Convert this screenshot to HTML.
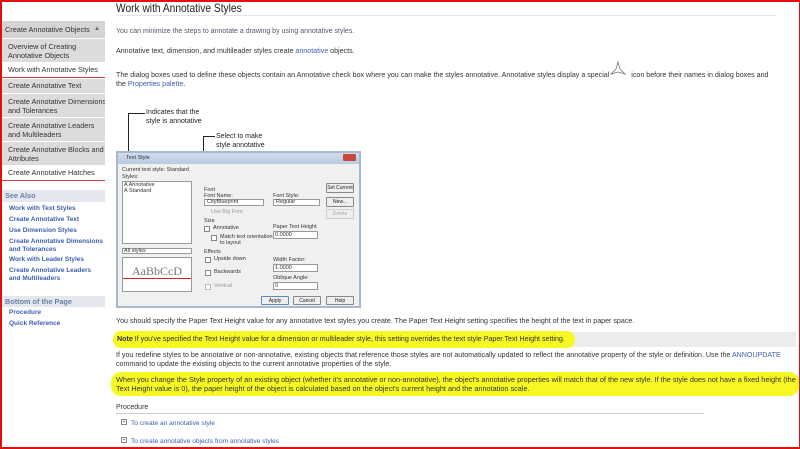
<!DOCTYPE html>
<html><head><style>
*{margin:0;padding:0;box-sizing:border-box}
body{width:800px;height:449px;overflow:hidden;background:#fff;font-family:"Liberation Sans",sans-serif;position:relative;color:#222}
.a{position:absolute;white-space:nowrap}
.frame{position:absolute;left:0;top:0;width:800px;height:449px;border:2px solid #e01010;border-right-width:1px;pointer-events:none;z-index:10}
.it{position:absolute;left:2px;width:103px;background:#dcdcdc;font-size:7.3px;line-height:9px;color:#333;padding-left:6px;white-space:nowrap;overflow:hidden}
.lk{position:absolute;left:9px;font-size:6.5px;font-weight:bold;color:#3a5fb0;line-height:8px;white-space:nowrap}
.t{font-size:7.1px;color:#333}
.blue{color:#3a5fb0}
.dl{position:absolute;font-size:5.5px;color:#333;white-space:nowrap}
.box{position:absolute;background:#fff;border:1px solid #999}
.btn{position:absolute;background:#eee;border:1px solid #888;font-size:5px;text-align:center;line-height:9px;border-radius:1px}
.cb{position:absolute;width:6px;height:6px;border:1px solid #888;background:#fff}
.p{font-size:7.1px;color:#333}
</style></head><body>
<div class="frame"></div>

<div class="it" style="top:21px;height:17px;line-height:17px;padding-left:3px;background:#d4d4d4">Create Annotative Objects<span style="position:absolute;right:5px;font-size:6px;color:#666">▲</span></div>
<div class="it" style="top:39px;height:23px;padding-top:3px">Overview of Creating<br>Annotative Objects</div>
<div class="it" style="top:63px;height:15px;line-height:14px;background:#fff;border-bottom:1px solid #d04040">Work with Annotative Styles</div>
<div class="it" style="top:79px;height:14px;line-height:14px">Create Annotative Text</div>
<div class="it" style="top:94px;height:23px;padding-top:3px">Create Annotative Dimensions<br>and Tolerances</div>
<div class="it" style="top:118px;height:23px;padding-top:3px">Create Annotative Leaders<br>and Multileaders</div>
<div class="it" style="top:142px;height:23px;padding-top:3px">Create Annotative Blocks and<br>Attributes</div>
<div class="it" style="top:166px;height:15px;line-height:14px;background:#fff;border-bottom:1px solid #d04040">Create Annotative Hatches</div>
<div class="it" style="top:190px;height:12px;line-height:12px;background:#e4e8ee;color:#6a80a8;font-weight:bold;padding-left:3px">See Also</div>
<div class="lk" style="top:205px">Work with Text Styles</div>
<div class="lk" style="top:216px">Create Annotative Text</div>
<div class="lk" style="top:227px">Use Dimension Styles</div>
<div class="lk" style="top:238px">Create Annotative Dimensions<br>and Tolerances</div>
<div class="lk" style="top:256px">Work with Leader Styles</div>
<div class="lk" style="top:267px">Create Annotative Leaders<br>and Multileaders</div>
<div class="it" style="top:296px;height:11px;line-height:11px;background:#e4e8ee;color:#6a80a8;font-weight:bold;padding-left:3px">Bottom of the Page</div>
<div class="lk" style="top:309px">Procedure</div>
<div class="lk" style="top:320px">Quick Reference</div>

<div class="a" style="left:116px;top:1px;font-size:12px;color:#222;transform:scaleX(0.85);transform-origin:left top">Work with Annotative Styles</div>
<div class="a" style="left:116px;top:15px;width:660px;height:1px;background:#e4e4e4"></div>
<div class="a" style="left:116px;top:28px;font-size:7px;color:#556">You can minimize the steps to annotate a drawing by using annotative styles.</div>
<div class="a t" style="left:116px;top:47px">Annotative text, dimension, and multileader styles create <span class="blue">annotative</span> objects.</div>
<div class="a t" style="left:116px;top:71px">The dialog boxes used to define these objects contain an Annotative check box where you can make the styles annotative. Annotative styles display a special <span style="display:inline-block;width:18px"></span> icon before their names in dialog boxes and</div>
<svg class="a" style="left:610px;top:61px" width="16" height="16" viewBox="0 0 16 16"><path d="M8 1 L10 8 L15 13 L8 11 L1 13 L6 8 Z" fill="none" stroke="#777" stroke-width="0.8"/></svg>
<div class="a t" style="left:116px;top:80px">the <span class="blue">Properties palette</span>.</div>

<div class="a" style="left:146px;top:108px;font-size:7px;line-height:9px;color:#222">Indicates that the<br>style is annotative</div>
<div class="a" style="left:128px;top:113px;width:17px;height:1px;background:#222"></div>
<div class="a" style="left:128px;top:113px;width:1px;height:78px;background:#222"></div>
<div class="a" style="left:216px;top:132px;font-size:7px;line-height:9px;color:#222">Select to make<br>style annotative</div>
<div class="a" style="left:203px;top:136px;width:12px;height:1px;background:#222"></div>
<div class="a" style="left:203px;top:136px;width:1px;height:94px;background:#222"></div>

<div class="a" style="left:116px;top:151px;width:245px;height:157px;background:#f0f0f0;border:2px solid #a9b8cc">
 <div style="position:absolute;left:0;top:0;width:241px;height:11px;background:linear-gradient(#cfdcec,#b8cbe2)"></div>
 <div class="dl" style="left:8px;top:2px">Text Style</div>
 <div style="position:absolute;right:3px;top:1px;width:13px;height:7px;background:#c84a3a;border-radius:1px"></div>
 <div class="dl" style="left:4px;top:14px">Current text style: Standard</div>
 <div class="dl" style="left:4px;top:21px">Styles:</div>
 <div class="box" style="left:4px;top:28px;width:70px;height:63px"></div>
 <div class="dl" style="left:6px;top:29px">A Annotative<br>A Standard</div>
 <div class="box" style="left:4px;top:95px;width:70px;height:6px"></div>
 <div class="dl" style="left:6px;top:95px">All styles</div>
 <div class="box" style="left:4px;top:104px;width:70px;height:35px;background:#fff"></div>
 <div class="dl" style="left:14px;top:111px;font-size:12px;color:#777;font-family:'Liberation Serif',serif">AaBbCcD</div>
 <div style="position:absolute;left:5px;top:125px;width:68px;height:1px;background:#d02020"></div>
 <div class="dl" style="left:86px;top:34px">Font<br>Font Name:</div>
 <div class="box" style="left:86px;top:46px;width:60px;height:7px"></div>
 <div class="dl" style="left:89px;top:46px">CityBlueprint</div>
 <div class="dl" style="left:155px;top:40px">Font Style:</div>
 <div class="box" style="left:155px;top:46px;width:47px;height:7px"></div>
 <div class="dl" style="left:158px;top:46px">Regular</div>
 <div class="dl" style="left:93px;top:56px;color:#999">Use Big Font</div>
 <div class="dl" style="left:86px;top:65px">Size</div>
 <div class="cb" style="left:86px;top:73px"></div><div class="dl" style="left:95px;top:72px">Annotative</div>
 <div class="cb" style="left:93px;top:82px"></div><div class="dl" style="left:102px;top:81px;line-height:6px">Match text orientation<br>to layout</div>
 <div class="dl" style="left:155px;top:71px">Paper Text Height</div>
 <div class="box" style="left:155px;top:78px;width:45px;height:8px"></div>
 <div class="dl" style="left:157px;top:79px">0.0000</div>
 <div class="dl" style="left:86px;top:96px">Effects</div>
 <div class="cb" style="left:87px;top:104px"></div><div class="dl" style="left:96px;top:103px">Upside down</div>
 <div class="cb" style="left:87px;top:117px"></div><div class="dl" style="left:96px;top:116px">Backwards</div>
 <div class="cb" style="left:87px;top:131px;border-color:#bbb"></div><div class="dl" style="left:96px;top:130px;color:#999">Vertical</div>
 <div class="dl" style="left:155px;top:104px">Width Factor:</div>
 <div class="box" style="left:155px;top:111px;width:45px;height:8px"></div><div class="dl" style="left:157px;top:112px">1.0000</div>
 <div class="dl" style="left:155px;top:122px">Oblique Angle:</div>
 <div class="box" style="left:155px;top:129px;width:45px;height:8px"></div><div class="dl" style="left:157px;top:130px">0</div>
 <div class="btn" style="left:208px;top:30px;width:28px;height:10px">Set Current</div>
 <div class="btn" style="left:208px;top:44px;width:28px;height:10px">New...</div>
 <div class="btn" style="left:208px;top:56px;width:28px;height:10px;color:#aaa;border-color:#ccc">Delete</div>
 <div class="btn" style="left:143px;top:143px;width:28px;height:9px;border-color:#5a8ac0">Apply</div>
 <div class="btn" style="left:175px;top:143px;width:28px;height:9px">Cancel</div>
 <div class="btn" style="left:208px;top:143px;width:28px;height:9px">Help</div>
</div>

<div class="a p" style="left:116px;top:317px">You should specify the Paper Text Height value for any annotative text styles you create. The Paper Text Height setting specifies the height of the text in paper space.</div>
<div class="a" style="left:116px;top:332px;width:680px;height:15px;background:#ececec"></div>
<div class="a" style="left:113px;top:331px;width:462px;height:17px;background:#f7f723;border-radius:8px"></div>
<div class="a p" style="left:117px;top:335px"><b>Note</b> If you've specified the Text Height value for a dimension or multileader style, this setting overrides the text style Paper Text Height setting.</div>
<div class="a p" style="left:116px;top:351px;line-height:9px">If you redefine styles to be annotative or non-annotative, existing objects that reference those styles are not automatically updated to reflect the annotative property of the style or definition. Use the <span class="blue">ANNOUPDATE</span><br>command to update the existing objects to the current annotative properties of the style.</div>
<div class="a" style="left:111px;top:372px;width:688px;height:24px;background:#f7f723;border-radius:10px"></div>
<div class="a p" style="left:116px;top:375px;line-height:9px;font-size:7.3px">When you change the Style property of an existing object (whether it's annotative or non-annotative), the object's annotative properties will match that of the new style. If the style does not have a fixed height (the<br>Text Height value is 0), the paper height of the object is calculated based on the object's current height and the annotation scale.</div>
<div class="a" style="left:116px;top:404px;font-size:7px;color:#333">Procedure</div>
<div class="a" style="left:116px;top:413px;width:588px;height:1px;background:#ccc"></div>
<div class="a" style="left:121px;top:419px;width:6px;height:6px;border:1px solid #888;font-size:5px;line-height:4px;text-align:center;color:#555">+</div>
<div class="a p" style="left:131px;top:420px;font-size:6.6px"><span class="blue">To create an annotative style</span></div>
<div class="a" style="left:121px;top:437px;width:6px;height:6px;border:1px solid #888;font-size:5px;line-height:4px;text-align:center;color:#555">+</div>
<div class="a p" style="left:131px;top:438px;font-size:6.6px"><span class="blue">To create annotative objects from annotative styles</span></div>
<div class="a" style="left:0;top:447px;width:800px;height:2px;background:#e01010"></div>
</body></html>
